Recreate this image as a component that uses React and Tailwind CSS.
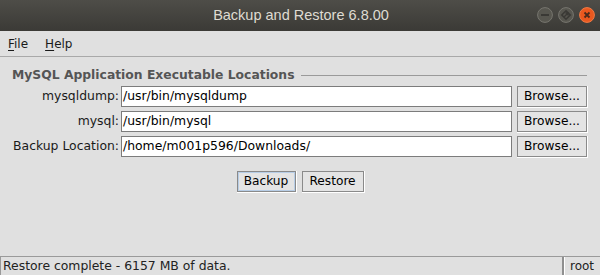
import React from "react";

const fieldRows = [
  { label: "mysqldump:", value: "/usr/bin/mysqldump" },
  { label: "mysql:", value: "/usr/bin/mysql" },
  { label: "Backup Location:", value: "/home/m001p596/Downloads/" },
];

// Ubuntu-style window controls
const WinButtons = () => (
  <div className="flex items-center gap-[5px] pr-[5px]">
    <svg width="16" height="16" viewBox="0 0 16 16">
      <circle cx="8" cy="8" r="7.4" fill="#57564f" stroke="#77766f" />
      <rect x="4" y="7" width="8" height="2" fill="#3a3935" />
    </svg>
    <svg width="16" height="16" viewBox="0 0 16 16">
      <circle cx="8" cy="8" r="7.4" fill="#57564f" stroke="#77766f" />
      <path d="M8 3.8 L12.2 8 L8 12.2 L3.8 8 Z" fill="none" stroke="#3a3935" strokeWidth="1.6" />
      <path d="M6 10 L10 6 M7.5 6 L10 6 L10 8.5" fill="none" stroke="#3a3935" strokeWidth="1.4" />
    </svg>
    <svg width="16" height="16" viewBox="0 0 16 16">
      <circle cx="8" cy="8" r="7.4" fill="#e9581f" stroke="#f07a45" />
      <path d="M5.5 5.5 L10.5 10.5 M10.5 5.5 L5.5 10.5" stroke="#4a2a1c" strokeWidth="1.8" />
    </svg>
  </div>
);

const SwingButton = ({ children, focused, className = "" }) => (
  <div className={`border-r border-b border-white ${className}`}>
    <div
      className={`h-[21px] border border-[#8a8a8a] bg-[#e4e4e4] flex items-center justify-center text-[12.2px] ${
        focused ? "shadow-[inset_0_0_0_1px_#b7cde6]" : ""
      }`}
    >
      {children}
    </div>
  </div>
);

export default function App() {
  return (
    <div
      className="w-[600px] h-[275px] flex flex-col bg-[#e0e0e0] text-[12.4px] text-black overflow-hidden"
      style={{ fontFamily: '"DejaVu Sans", sans-serif' }}
    >
      {/* title bar */}
      <div className="h-[31px] flex items-center bg-gradient-to-b from-[#4e4d48] to-[#3b3a36] relative">
        <div
          className="flex-1 text-center text-[14.5px] text-[#dfdbd2] pl-[2px]"
          style={{ fontFamily: '"Liberation Sans", Arial, sans-serif' }}
        >
          Backup and Restore 6.8.00
        </div>
        <div className="absolute right-0 top-[7px]">
          <WinButtons />
        </div>
      </div>

      {/* menu bar */}
      <div className="h-[26px] flex items-center gap-[17px] pl-[8px] border-b border-[#a9a9a9] text-[#1a1a1a] text-[12px]">
        <span>
          <span className="underline underline-offset-2">F</span>ile
        </span>
        <span>
          <span className="underline underline-offset-2">H</span>elp
        </span>
      </div>

      {/* content */}
      <div className="flex-1 flex flex-col pt-[11px]">
        <div className="flex items-center pl-[12px] pr-[13px]">
          <span className="font-bold text-[12.35px] text-[#555555] leading-[14px]">
            MySQL Application Executable Locations
          </span>
          <div className="flex-1 h-px bg-[#9a9a9a] ml-[7px]" />
        </div>

        <div className="flex flex-col gap-[4px] mt-[4px]">
          {fieldRows.map((row) => (
            <div key={row.label} className="flex items-center h-[21px]">
              <div className="w-[121px] pr-[2px] text-right text-[#1a1a1a] whitespace-nowrap">{row.label}</div>
              <div className="w-[391px] h-[21px] border border-[#7c7c7c] bg-white flex items-center pl-[1px]">
                {row.value}
              </div>
              <SwingButton className="ml-[5px] w-[71px]">Browse...</SwingButton>
            </div>
          ))}
        </div>

        <div className="flex justify-center gap-[5px] mt-[14px] pl-[1px]">
          <SwingButton focused className="w-[60px]">Backup</SwingButton>
          <SwingButton className="w-[63px]">Restore</SwingButton>
        </div>
      </div>

      {/* status bar */}
      <div className="h-[19px] flex border-t border-[#9a9a9a] text-[#222]">
        <div className="flex-1 flex items-center pl-[2px] border-l border-[#9a9a9a]">
          Restore complete - 6157 MB of data.
        </div>
        <div className="w-[38px] flex items-center border-l-2 border-[#8f8f8f] pl-[6px] text-[12px]">
          <span className="border-l border-white h-full -ml-[6px] mr-[5px]" />
          root
        </div>
      </div>
    </div>
  );
}
